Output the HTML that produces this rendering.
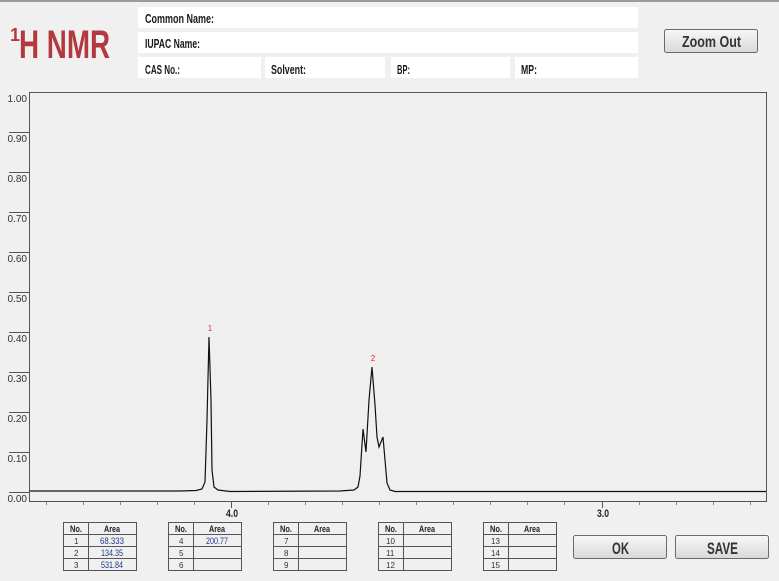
<!DOCTYPE html>
<html><head><meta charset="utf-8"><style>
html,body{margin:0;padding:0;background:#f0f0f0;width:779px;height:581px;overflow:hidden}
svg{display:block}
.c{font-family:"Liberation Sans Narrow","Liberation Sans",sans-serif;font-weight:bold}
.n{font-family:"Liberation Sans",sans-serif}
</style></head><body>
<svg width="779" height="581" viewBox="0 0 779 581" xmlns="http://www.w3.org/2000/svg">
<rect x="0" y="0" width="779" height="581" fill="#f0f0f0"/>
<rect x="0" y="0" width="779" height="2" fill="#9a9a9a"/>
<text x="10" y="41" class="c" font-size="18" fill="#b23a3e">1</text>
<text x="19" y="58" class="c" font-size="40" fill="#b23a3e" textLength="91" lengthAdjust="spacingAndGlyphs">H NMR</text>
<g fill="#ffffff">
<rect x="138" y="7" width="500" height="21"/>
<rect x="138" y="32" width="500" height="21"/>
<rect x="138" y="57" width="123" height="21"/>
<rect x="265" y="57" width="120" height="21"/>
<rect x="391" y="57" width="119" height="21"/>
<rect x="515" y="57" width="123" height="21"/>
</g>
<g class="c" font-size="13" fill="#1a1a1a" font-weight="bold">
<text x="145" y="23" textLength="69" lengthAdjust="spacingAndGlyphs">Common Name:</text>
<text x="145" y="48" textLength="55" lengthAdjust="spacingAndGlyphs">IUPAC Name:</text>
<text x="145" y="74" textLength="35" lengthAdjust="spacingAndGlyphs">CAS No.:</text>
<text x="271" y="74" textLength="35" lengthAdjust="spacingAndGlyphs">Solvent:</text>
<text x="397" y="74" textLength="13" lengthAdjust="spacingAndGlyphs">BP:</text>
<text x="521" y="74" textLength="16" lengthAdjust="spacingAndGlyphs">MP:</text>
</g>
<defs><linearGradient id="bg" x1="0" y1="0" x2="0" y2="1"><stop offset="0" stop-color="#f8f8f8"/><stop offset="1" stop-color="#d8d8d8"/></linearGradient></defs>
<rect x="664.5" y="29.5" width="93" height="23" rx="2" fill="url(#bg)" stroke="#6a6a6a"/>
<text x="682" y="47" class="c" font-size="16" fill="#333" textLength="59" lengthAdjust="spacingAndGlyphs">Zoom Out</text>
<rect x="573.5" y="535.5" width="93" height="23" rx="2" fill="url(#bg)" stroke="#6a6a6a"/>
<text x="612" y="554" class="c" font-size="17" fill="#333" textLength="17" lengthAdjust="spacingAndGlyphs">OK</text>
<rect x="675.5" y="535.5" width="93" height="23" rx="2" fill="url(#bg)" stroke="#6a6a6a"/>
<text x="707" y="554" class="c" font-size="17" fill="#333" textLength="31" lengthAdjust="spacingAndGlyphs">SAVE</text>
<rect x="29.5" y="92.5" width="737" height="409" fill="#efefef" stroke="#555" stroke-width="1"/>
<g stroke="#555" stroke-width="1">
<line x1="9" y1="132.5" x2="29" y2="132.5"/><line x1="9" y1="172.5" x2="29" y2="172.5"/>
<line x1="9" y1="212.5" x2="29" y2="212.5"/><line x1="9" y1="252.5" x2="29" y2="252.5"/>
<line x1="9" y1="292.5" x2="29" y2="292.5"/><line x1="9" y1="332.5" x2="29" y2="332.5"/>
<line x1="9" y1="372.5" x2="29" y2="372.5"/><line x1="9" y1="412.5" x2="29" y2="412.5"/>
<line x1="9" y1="452.5" x2="29" y2="452.5"/><line x1="9" y1="492.5" x2="29" y2="492.5"/>
</g>
<g class="n" font-size="10" fill="#333" text-anchor="end">
<text x="27" y="102">1.00</text><text x="27" y="142">0.90</text><text x="27" y="182">0.80</text>
<text x="27" y="222">0.70</text><text x="27" y="262">0.60</text><text x="27" y="302">0.50</text>
<text x="27" y="342">0.40</text><text x="27" y="382">0.30</text><text x="27" y="422">0.20</text>
<text x="27" y="462">0.10</text><text x="27" y="502">0.00</text>
</g>
<g stroke="#888" stroke-width="1">
<line x1="46.5" y1="502" x2="46.5" y2="505"/><line x1="83.5" y1="502" x2="83.5" y2="505"/>
<line x1="120.5" y1="502" x2="120.5" y2="505"/><line x1="157.5" y1="502" x2="157.5" y2="505"/>
<line x1="194.5" y1="502" x2="194.5" y2="505"/><line x1="231.5" y1="502" x2="231.5" y2="508" stroke="#555"/>
<line x1="268.5" y1="502" x2="268.5" y2="505"/><line x1="305.5" y1="502" x2="305.5" y2="505"/>
<line x1="342.5" y1="502" x2="342.5" y2="505"/><line x1="379.5" y1="502" x2="379.5" y2="505"/>
<line x1="416.5" y1="502" x2="416.5" y2="505"/><line x1="453.5" y1="502" x2="453.5" y2="505"/>
<line x1="490.5" y1="502" x2="490.5" y2="505"/><line x1="527.5" y1="502" x2="527.5" y2="505"/>
<line x1="564.5" y1="502" x2="564.5" y2="505"/><line x1="602.5" y1="502" x2="602.5" y2="508" stroke="#555"/>
<line x1="639.5" y1="502" x2="639.5" y2="505"/><line x1="676.5" y1="502" x2="676.5" y2="505"/>
<line x1="713.5" y1="502" x2="713.5" y2="505"/><line x1="750.5" y1="502" x2="750.5" y2="505"/>
</g>
<text x="232" y="517" text-anchor="middle" class="c" font-size="11" fill="#222" textLength="12" lengthAdjust="spacingAndGlyphs">4.0</text>
<text x="603" y="517" text-anchor="middle" class="c" font-size="11" fill="#222" textLength="12" lengthAdjust="spacingAndGlyphs">3.0</text>
<polyline fill="none" stroke="#111" stroke-width="1.2" points="30,491 180,491 196,490.5 202,489 205,482 207,420 209,337 211,400 212,470 214,487 218,490 230,491.5 340,491 354,490 358,487 360,476 363,429 366,452 369,400 372,367 375,405 377,437 379,447 383,437 385,460 387,483 390,490 395,491.5 766,491.5"/>
<text x="210" y="331" text-anchor="middle" class="n" font-size="8" fill="#c44">1</text>
<text x="373" y="361" text-anchor="middle" class="n" font-size="8" fill="#d22">2</text>
<g id="t" stroke="#555" fill="#f0f0f0">
<rect x="63.5" y="522.5" width="73" height="48"/>
<line x1="88.5" y1="522" x2="88.5" y2="571"/>
<line x1="63" y1="534.5" x2="137" y2="534.5"/>
<line x1="63" y1="546.5" x2="137" y2="546.5"/>
<line x1="63" y1="558.5" x2="137" y2="558.5"/>
</g>
<use href="#t" x="105"/><use href="#t" x="210"/><use href="#t" x="315"/><use href="#t" x="420"/>
<g class="c" font-size="9" fill="#222" text-anchor="middle">
<text x="76" y="532" textLength="12" lengthAdjust="spacingAndGlyphs">No.</text><text x="112" y="532" textLength="16" lengthAdjust="spacingAndGlyphs">Area</text>
<text x="181" y="532" textLength="12" lengthAdjust="spacingAndGlyphs">No.</text><text x="217" y="532" textLength="16" lengthAdjust="spacingAndGlyphs">Area</text>
<text x="286" y="532" textLength="12" lengthAdjust="spacingAndGlyphs">No.</text><text x="322" y="532" textLength="16" lengthAdjust="spacingAndGlyphs">Area</text>
<text x="391" y="532" textLength="12" lengthAdjust="spacingAndGlyphs">No.</text><text x="427" y="532" textLength="16" lengthAdjust="spacingAndGlyphs">Area</text>
<text x="496" y="532" textLength="12" lengthAdjust="spacingAndGlyphs">No.</text><text x="532" y="532" textLength="16" lengthAdjust="spacingAndGlyphs">Area</text>
</g>
<g class="n" font-size="9" fill="#1a3a8a" text-anchor="middle">
<text x="112" y="544" textLength="24" lengthAdjust="spacingAndGlyphs">68.333</text><text x="112" y="556" textLength="22" lengthAdjust="spacingAndGlyphs">134.35</text><text x="112" y="568" textLength="22" lengthAdjust="spacingAndGlyphs">531.84</text>
<text x="217" y="544" textLength="22" lengthAdjust="spacingAndGlyphs">200.77</text>
</g>
<g class="n" font-size="8" fill="#333">
<text x="74" y="544">1</text><text x="74" y="556">2</text><text x="74" y="568">3</text>
<text x="179" y="544">4</text><text x="179" y="556">5</text><text x="179" y="568">6</text>
<text x="284" y="544">7</text><text x="284" y="556">8</text><text x="284" y="568">9</text>
<text x="386" y="544">10</text><text x="386" y="556">11</text><text x="386" y="568">12</text>
<text x="491" y="544">13</text><text x="491" y="556">14</text><text x="491" y="568">15</text>
</g>
</svg>
</body></html>
